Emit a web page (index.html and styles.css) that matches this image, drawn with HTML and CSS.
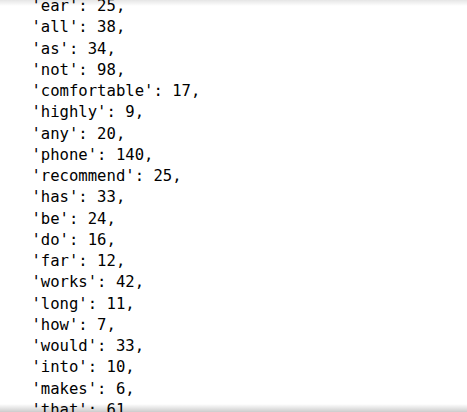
FILE: index.html
```html
<!DOCTYPE html>
<html>
<head>
<meta charset="utf-8">
<link rel="stylesheet" href="styles.css">
</head>
<body>
<div class="output">
<pre class="text"> 'ear': 25,
 'all': 38,
 'as': 34,
 'not': 98,
 'comfortable': 17,
 'highly': 9,
 'any': 20,
 'phone': 140,
 'recommend': 25,
 'has': 33,
 'be': 24,
 'do': 16,
 'far': 12,
 'works': 42,
 'long': 11,
 'how': 7,
 'would': 33,
 'into': 10,
 'makes': 6,
 'that': 61,</pre>
</div>
</body>
</html>
```
FILE: styles.css
```css
html, body {
  margin: 0;
  padding: 0;
  background: #fff;
}
.output {
  position: relative;
  width: 467px;
  height: 412px;
  overflow: hidden;
  background: #fff;
}
.output::before,
.output::after {
  content: "";
  position: absolute;
  left: 0;
  right: 0;
  pointer-events: none;
}
.output::before {
  top: 0;
  height: 6px;
  background: linear-gradient(to bottom, rgba(0,0,0,0.1), rgba(0,0,0,0));
}
.output::after {
  bottom: 0;
  height: 8px;
  background: linear-gradient(to top, rgba(0,0,0,0.2), rgba(0,0,0,0));
}
.text {
  margin: -4px 0 0 0;
  padding: 0 0 0 22px;
  font-family: "DejaVu Sans Mono", "Liberation Mono", monospace;
  font-size: 15.6px;
  line-height: 21.25px;
  color: #000;
}
```
